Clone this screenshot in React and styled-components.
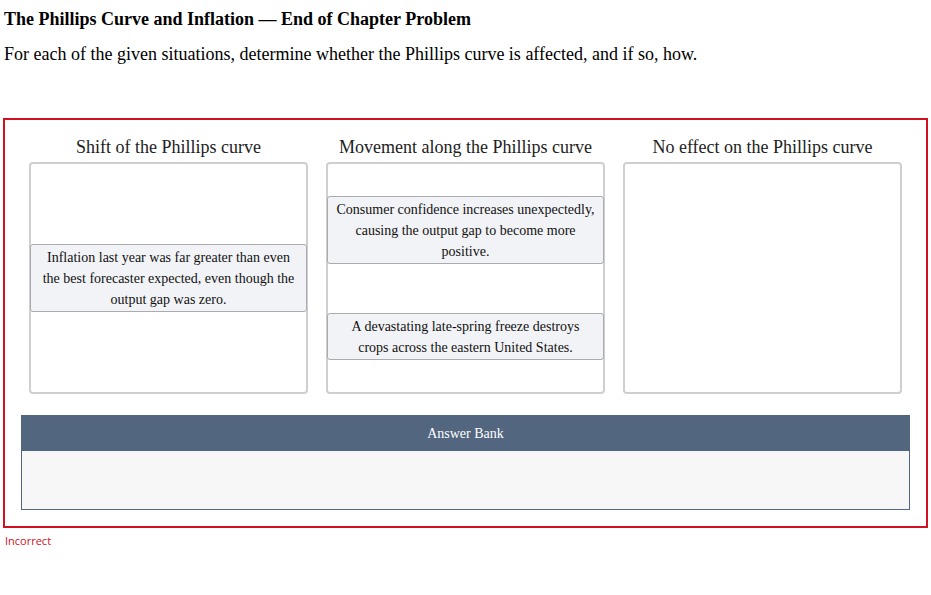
import React from 'react';
import styled, { createGlobalStyle } from 'styled-components';

const GlobalStyle = createGlobalStyle`
  body {
    margin: 0;
    background: #ffffff;
    font-family: "Liberation Serif", "Times New Roman", serif;
    color: #000;
  }
`;

const Page = styled.div`
  padding: 7px 3px 0 3px;
  width: 931px;
  box-sizing: border-box;
`;

const Title = styled.h1`
  margin: 0 0 0 1px;
  font-size: 18px;
  line-height: 24px;
  font-weight: bold;
`;

const Prompt = styled.p`
  margin: 11px 0 0 1px;
  font-size: 18px;
  line-height: 24px;
`;

const Question = styled.div`
  margin-top: 52px;
  width: 925px;
  height: 410px;
  box-sizing: border-box;
  border: 2px solid #d0111f;
  padding: 16px 16px 0 16px;
`;

const Columns = styled.div`
  display: grid;
  grid-template-columns: repeat(3, 279px);
  column-gap: 18px;
  justify-content: center;
`;

const Column = styled.div`
  display: flex;
  flex-direction: column;
`;

const ColumnTitle = styled.div`
  text-align: center;
  font-size: 18px;
  line-height: 22px;
  color: #222;
  margin-bottom: 4px;
`;

const DropZone = styled.div`
  height: 232px;
  box-sizing: border-box;
  border: 2px solid #cfcfcf;
  border-radius: 4px;
  display: flex;
  flex-direction: column;
  justify-content: center;
  gap: 49px;
`;

const Card = styled.div`
  margin: 0 -1px;
  background: #f2f3f6;
  border: 1px solid #a9abae;
  border-radius: 3px;
  padding: 2px 7px 1px;
  font-size: 14px;
  line-height: 21px;
  text-align: center;
  color: #111;
`;

const Bank = styled.div`
  margin-top: 21px;
  border: 1px solid #52667f;
`;

const BankHeader = styled.div`
  background: #52667f;
  color: #fff;
  text-align: center;
  font-size: 14px;
  height: 35px;
  line-height: 35px;
`;

const BankBody = styled.div`
  background: #f7f7f7;
  height: 58px;
`;

const Status = styled.div`
  margin: 5px 0 0 2px;
  font-family: "Open Sans", "Liberation Sans", sans-serif;
  font-size: 11px;
  color: #d0111f;
`;

const columns = [
  {
    title: 'Shift of the Phillips curve',
    cards: [
      'Inflation last year was far greater than even the best forecaster expected, even though the output gap was zero.',
    ],
  },
  {
    title: 'Movement along the Phillips curve',
    cards: [
      'Consumer confidence increases unexpectedly, causing the output gap to become more positive.',
      'A devastating late-spring freeze destroys crops across the eastern United States.',
    ],
  },
  {
    title: 'No effect on the Phillips curve',
    cards: [],
  },
];

const App = () => (
  <Page>
    <GlobalStyle />
    <Title>The Phillips Curve and Inflation — End of Chapter Problem</Title>
    <Prompt>For each of the given situations, determine whether the Phillips curve is affected, and if so, how.</Prompt>
    <Question>
      <Columns>
        {columns.map((col) => (
          <Column key={col.title}>
            <ColumnTitle>{col.title}</ColumnTitle>
            <DropZone>
              {col.cards.map((c) => (
                <Card key={c}>{c}</Card>
              ))}
            </DropZone>
          </Column>
        ))}
      </Columns>
      <Bank>
        <BankHeader>Answer Bank</BankHeader>
        <BankBody />
      </Bank>
    </Question>
    <Status>Incorrect</Status>
  </Page>
);

export default App;
